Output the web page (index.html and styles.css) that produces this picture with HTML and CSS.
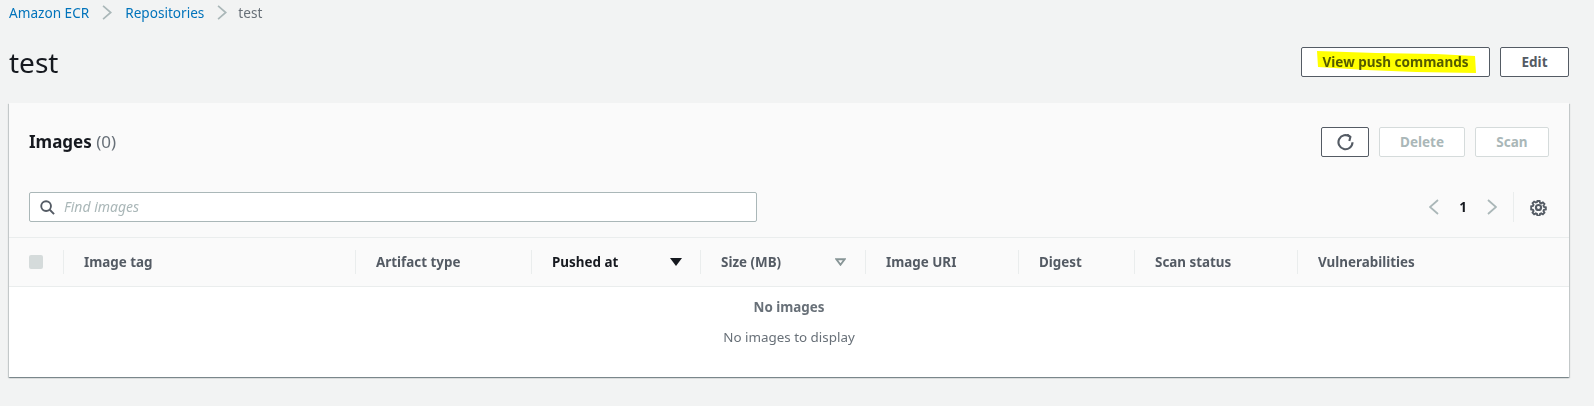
FILE: index.html
```html
<!DOCTYPE html>
<html lang="en">
<head>
<meta charset="utf-8">
<title>test</title>
<link rel="stylesheet" href="styles.css">
</head>
<body>
<nav class="crumbs">
  <a class="crumb-link">Amazon ECR</a>
  <svg class="crumb-sep" viewBox="0 0 10 16"><path d="M.8 1 9 8 .8 15"/></svg>
  <a class="crumb-link">Repositories</a>
  <svg class="crumb-sep crumb-sep-last" viewBox="0 0 10 16"><path d="M.8 1 9 8 .8 15"/></svg>
  <span class="crumb-current">test</span>
</nav>
<header class="page-head">
  <h1 class="page-title">test</h1>
  <div class="page-actions">
    <button class="btn btn-push">View push commands
      <svg class="marker" viewBox="0 0 160 22" preserveAspectRatio="none"><path d="M1 0 60 2 120 3 159 5 160 22 100 21 50 19 2 16Z"/></svg>
    </button>
    <button class="btn btn-edit">Edit</button>
  </div>
</header>
<main class="card">
  <section class="card-head">
    <div class="title-row">
      <h2 class="card-title">Images <span class="count">(0)</span></h2>
      <div class="tools">
        <button class="btn btn-refresh" aria-label="Refresh">
          <svg class="icon" viewBox="0 0 16 16"><path d="M14.6 7.8A6.6 6.6 0 1 1 12.2 2.6"/><path d="M9.4 .4 12.6 2.8 11.6 6.6"/></svg>
        </button>
        <button class="btn btn-off btn-delete">Delete</button>
        <button class="btn btn-off btn-scan">Scan</button>
      </div>
    </div>
    <div class="filter-row">
      <div class="search">
        <svg class="search-icon" viewBox="0 0 16 16"><circle cx="6.5" cy="6.5" r="5.2"/><path d="M10.4 10.4 15 15"/></svg>
        <span class="placeholder">Find images</span>
      </div>
      <div class="pager">
        <svg class="pg-arrow" viewBox="0 0 10 16"><path d="M9 1 1 8 9 15"/></svg>
        <span class="pg-num">1</span>
        <svg class="pg-arrow" viewBox="0 0 10 16"><path d="M1 1 9 8 1 15"/></svg>
        <span class="pg-divider"></span>
        <svg class="gear" viewBox="0 0 16 16"><circle cx="8" cy="8" r="2.4"/><path d="M6.8 1h2.4l.4 2 1.3.6 1.8-1.1 1.7 1.7-1.1 1.8.6 1.3 2 .4v2.4l-2 .4-.6 1.3 1.1 1.8-1.7 1.7-1.8-1.1-1.3.6-.4 2H6.8l-.4-2-1.3-.6-1.8 1.1-1.7-1.7 1.1-1.8-.6-1.3-2-.4V6.8l2-.4.6-1.3-1.1-1.8 1.7-1.7 1.8 1.1 1.3-.6z" transform="translate(1 1) scale(.875)"/></svg>
      </div>
    </div>
  </section>
  <div class="thead">
    <div class="th th-check"><span class="checkbox"></span></div>
    <div class="th th-tag">Image tag</div>
    <div class="th th-type">Artifact type</div>
    <div class="th th-pushed sorted">Pushed at <svg class="sort" viewBox="0 0 12 8"><path d="M0 0H12L6 8Z"/></svg></div>
    <div class="th th-size">Size (MB) <svg class="sort sort-idle" viewBox="0 0 12 8"><path d="M1.5 1H10.5L6 7Z"/></svg></div>
    <div class="th th-uri">Image URI</div>
    <div class="th th-digest">Digest</div>
    <div class="th th-scan">Scan status</div>
    <div class="th th-vuln">Vulnerabilities</div>
  </div>
  <div class="empty">
    <strong class="empty-title">No images</strong>
    <p class="empty-text">No images to display</p>
  </div>
</main>
</body>
</html>
```

FILE: styles.css
```css
* { box-sizing: border-box; }
html, body { margin: 0; height: 100%; }
body {
  background: #f2f3f3;
  font-family: "Noto Sans", "Open Sans", sans-serif;
  font-size: 14px;
  color: #16191f;
  padding: 0 25px 0 9px;
  overflow: hidden;
}
.crumbs { display: flex; align-items: center; height: 24px; }
.crumb-link { color: #0073bb; font-size: 13.6px; }
.crumb-current { color: #687078; font-size: 13.6px; }
.crumb-sep { width: 10px; height: 15px; margin: 0 13px; fill: none; stroke: #aab7b8; stroke-width: 1.8; }
.crumb-sep-last { margin-right: 11px; }
.page-head { display: flex; justify-content: space-between; align-items: center; height: 30px; margin-top: 23px; }
.page-title { margin: 0; font-size: 28px; font-weight: 400; line-height: 30px; }
.page-actions { display: flex; gap: 10px; }
.btn {
  position: relative;
  height: 30px;
  padding: 1px 0 0;
  background: #fff;
  border: 1px solid #545b64;
  border-radius: 2px;
  color: #545b64;
  font: 700 13.5px/1 "Noto Sans", "Open Sans", sans-serif;
}
.btn-push { width: 189px; }
.btn-edit { width: 69px; }
.marker { position: absolute; left: 14px; top: 3px; width: 160px; height: 22px; mix-blend-mode: multiply; fill: #ffff00; }
.card {
  margin-top: 26px;
  height: 274px;
  background: #fff;
  box-shadow: 0 1px 1px 0 rgba(0, 28, 36, .3), 1px 1px 1px 0 rgba(0, 28, 36, .15), -1px 1px 1px 0 rgba(0, 28, 36, .15);
}
.card-head { background: #fafafa; border-bottom: 1px solid #eaeded; height: 135px; padding: 24px 20px 0; }
.title-row { display: flex; justify-content: space-between; align-items: center; height: 30px; }
.card-title { margin: 0; font-size: 17px; font-weight: 700; line-height: 28px; }
.count { color: #687078; font-weight: 400; }
.tools { display: flex; gap: 10px; }
.btn-refresh { width: 48px; display: flex; align-items: center; justify-content: center; background: #fff; padding: 0; }
.icon { width: 17px; height: 17px; fill: none; stroke: #545b64; stroke-width: 2; }
.btn-off { border-color: #d5dbdb; color: #aab7b8; }
.btn-delete { width: 86px; }
.btn-scan { width: 74px; }
.filter-row { display: flex; justify-content: space-between; align-items: center; margin-top: 35px; height: 30px; }
.search {
  display: flex; align-items: center;
  width: 728px; height: 30px;
  padding-left: 10px;
  background: #fff;
  border: 1px solid #aab7b8;
  border-radius: 2px;
}
.search-icon { width: 15px; height: 15px; fill: none; stroke: #545b64; stroke-width: 2; }
.placeholder { margin: 0 0 2px 9px; color: #aab7b8; font-style: italic; font-size: 14px; }
.pager { display: flex; align-items: center; height: 30px; padding-right: 2px; }
.pg-arrow { width: 10px; height: 16px; fill: none; stroke: #aab7b8; stroke-width: 1.8; }
.pg-num { width: 48px; text-align: center; font-weight: 700; font-size: 13.5px; }
.pg-divider { width: 1px; height: 30px; background: #eaeded; margin: 0 16px; }
.gear { width: 17px; height: 17px; fill: none; stroke: #545b64; stroke-width: 2; }
.thead { display: flex; height: 49px; background: #fafafa; border-bottom: 1px solid #eaeded; align-items: center; }
.th {
  display: flex; align-items: center; justify-content: space-between;
  height: 24px;
  padding: 0 20px;
  border-left: 1px solid #eaeded;
  color: #545b64;
  font-weight: 700;
  font-size: 13.4px;
}
.th-check { width: 54px; border-left: 0; }
.checkbox { width: 14px; height: 14px; background: #d5dbdb; border-radius: 2px; }
.th-tag { width: 292px; }
.th-type { width: 176px; }
.th-pushed { width: 169px; padding-right: 18px; color: #16191f; }
.th-size { width: 165px; padding-right: 19px; }
.th-uri { width: 153px; }
.th-digest { width: 116px; }
.th-scan { width: 163px; }
.th-vuln { flex: 1; }
.sort { width: 12px; height: 8px; fill: #16191f; }
.sort-idle { width: 11px; fill: none; stroke: #879596; stroke-width: 2; }
.empty { display: flex; flex-direction: column; align-items: center; padding-top: 10px; color: #687078; }
.empty-title { font-size: 13.4px; line-height: 20px; }
.empty-text { margin: 10px 0 0; font-size: 13.4px; line-height: 20px; }
```
